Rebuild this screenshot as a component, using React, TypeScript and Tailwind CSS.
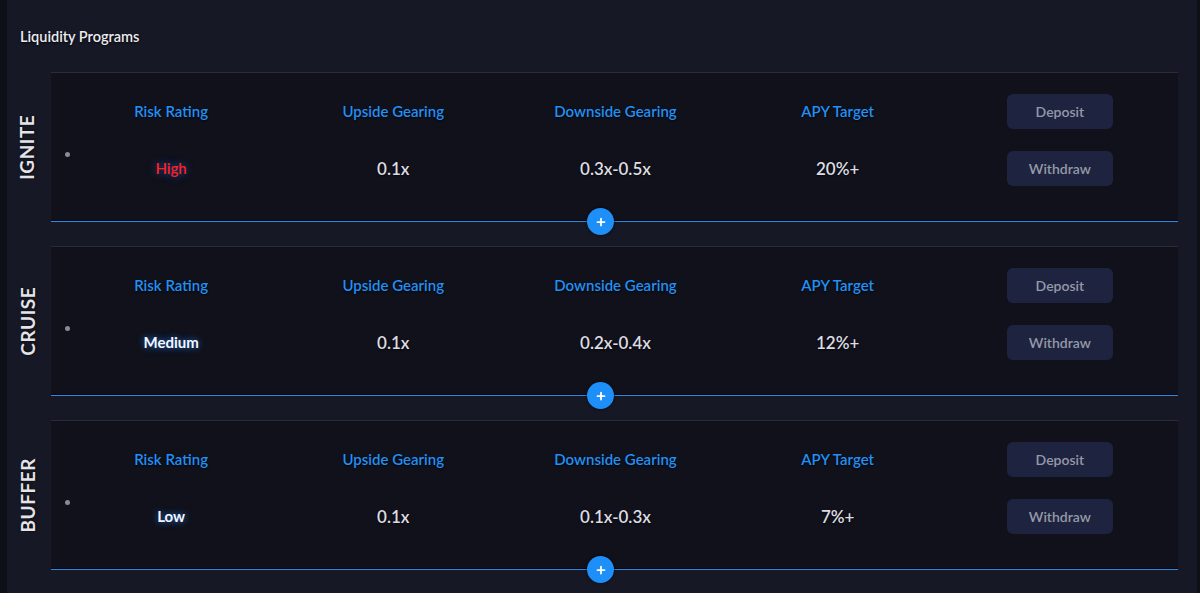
import { Plus } from 'lucide-react';

const programs = [
  { name: 'IGNITE', risk: 'High', upside: '0.1x', downside: '0.3x-0.5x', apy: '20%+' },
  { name: 'CRUISE', risk: 'Medium', upside: '0.1x', downside: '0.2x-0.4x', apy: '12%+' },
  { name: 'BUFFER', risk: 'Low', upside: '0.1x', downside: '0.1x-0.3x', apy: '7%+' },
];

const headers = ['Risk Rating', 'Upside Gearing', 'Downside Gearing', 'APY Target'];

function ProgramRow({ p }: { p: (typeof programs)[number] }) {
  const values = [p.upside, p.downside, p.apy];
  return (
    <div className="flex h-[150px]">
      {/* vertical label */}
      <div className="w-[42px] flex items-center justify-center">
        <span className="-rotate-90 whitespace-nowrap text-[19px] font-bold tracking-[0.5px] text-[#e4e4e8] [text-shadow:0_1px_2px_rgba(0,0,0,0.8)]">
          {p.name}
        </span>
      </div>

      {/* card */}
      <div className="relative flex-1 ml-[2px] mr-[19px] flex flex-col bg-[#10111a] border-t border-[#2a2c37]">
        <div className="absolute left-[14px] top-[79px] w-[5px] h-[5px] rounded-full bg-[#8a8a90]" />
        <div className="flex-1 grid grid-cols-5 content-start pl-[9px] pr-[7px] pt-[21px]">
          {headers.map((h) => (
            <div key={h} className="h-[35px] flex items-center justify-center text-[15px] font-semibold text-[#2290f5] [text-shadow:0_1px_2px_rgba(0,0,0,0.7)]">
              {h}
            </div>
          ))}
          <div className="flex justify-center">
            <button className="w-[106px] h-[35px] rounded-[6px] bg-[#1e2440] text-[14px] font-semibold text-[#9599a8]">
              Deposit
            </button>
          </div>

          <div className="mt-[22px] h-[35px] flex items-center justify-center">
            {p.risk === 'High' ? (
              <span className="text-[15px] font-semibold text-[#ff1f1f] [text-shadow:0_0_8px_rgba(30,120,255,0.7)]">
                {p.risk}
              </span>
            ) : (
              <span className="text-[15px] font-bold text-[#f4f6ff] [text-shadow:0_0_7px_rgba(30,130,255,0.85)]">
                {p.risk}
              </span>
            )}
          </div>
          {values.map((v, i) => (
            <div key={i} className="mt-[22px] h-[35px] flex items-center justify-center text-[17px] font-semibold text-[#dcdce2] [text-shadow:0_1px_2px_rgba(0,0,0,0.6)]">
              {v}
            </div>
          ))}
          <div className="mt-[22px] flex justify-center">
            <button className="w-[106px] h-[35px] rounded-[6px] bg-[#1e2440] text-[14px] font-semibold text-[#9599a8]">
              Withdraw
            </button>
          </div>
        </div>

        <div className="h-[1px] bg-[#05060a]" />
        <div className="h-[1px] bg-[#2b8ae6]" />

        <div className="absolute left-[536px] -bottom-[13px] w-[27px] h-[27px] rounded-full bg-[#1e8ff8] flex items-center justify-center shadow-[0_0_3px_rgba(0,0,0,0.8)]">
          <Plus className="w-[12px] h-[12px] text-white" strokeWidth={3.5} />
        </div>
      </div>
    </div>
  );
}

export default function App() {
  return (
    <div className="w-full h-[593px] bg-[#0e1018] flex font-['Lato',sans-serif] overflow-hidden">
      <div className="ml-[7px] mr-[3px] flex-1 bg-[#161826]">
        <div className="pl-[13px] pt-[27px] h-[72px] text-[14.5px] leading-[20px] font-semibold text-[#ececf0] [text-shadow:0_1px_2px_rgba(0,0,0,0.8)]">
          Liquidity Programs
        </div>
        <div className="flex flex-col gap-[24px]">
          {programs.map((p) => (
            <ProgramRow key={p.name} p={p} />
          ))}
        </div>
      </div>
    </div>
  );
}
